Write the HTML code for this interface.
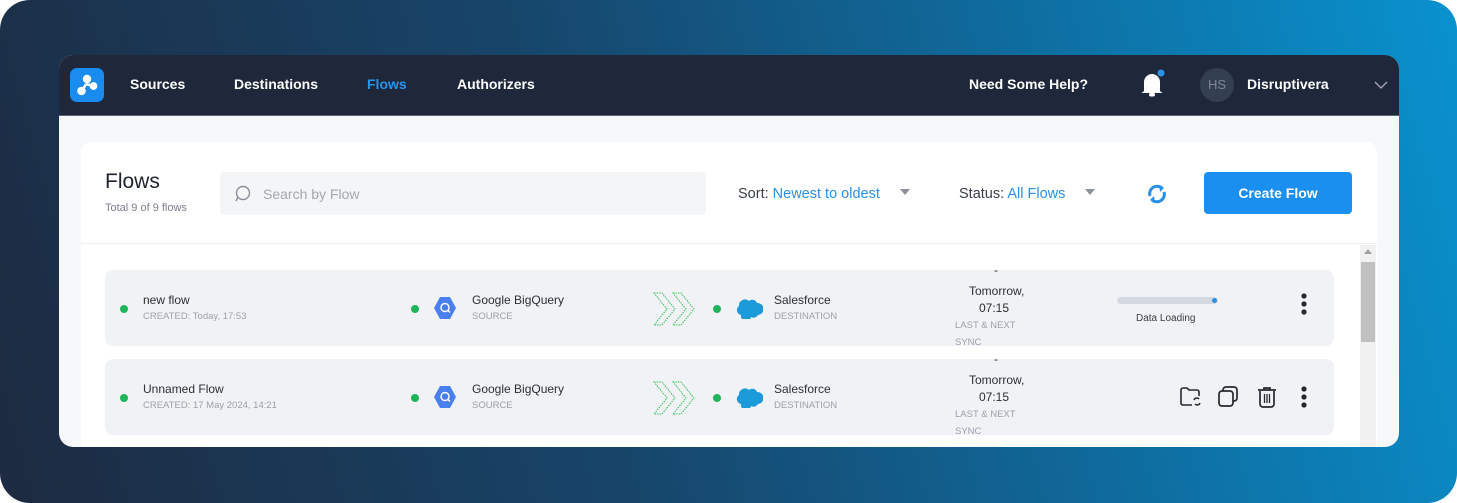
<!DOCTYPE html><html><head><style>
*{margin:0;padding:0;box-sizing:border-box}
body{width:1457px;height:503px;overflow:hidden;font-family:"Liberation Sans",sans-serif;background:#fff}
.bg{position:absolute;inset:0;border-radius:30px;background:linear-gradient(75deg,#1d2a40 0%,#17456a 40%,#0f6a9c 70%,#0992cf 100%)}
.win{position:absolute;left:59px;top:55px;width:1340px;height:392px;border-radius:14px;overflow:hidden;background:#f7f8fa}
.nav{position:absolute;left:0;top:0;width:1340px;height:61px;background:#1e283a;border-bottom:1px solid #5a6474}
.nav .t{position:absolute;top:21px;font-size:14px;font-weight:bold;color:#fff}
.logo{position:absolute;left:11px;top:13px;width:34px;height:34px;border-radius:7px;background:#1a8cf0}
.card{position:absolute;left:22px;top:87px;width:1296px;height:320px;background:#fff;border-radius:10px}
.abs{position:absolute}
.row{position:absolute;left:46px;width:1229px;height:76px;background:#f1f2f6;border-radius:8px}
.dot{position:absolute;width:8px;height:8px;border-radius:50%;background:#1fb35a}
.n{position:absolute;font-size:12px;color:#2c2f36}
.s{position:absolute;font-size:9.5px;color:#9aa0aa}
</style></head><body>
<div class="bg"></div>
<div class="win">
 <div class="nav">
  <div class="logo"><svg width="34" height="34"><g fill="#fff" stroke="#fff" stroke-width="2.5"><line x1="12" y1="23" x2="16" y2="16"/><line x1="16" y1="16" x2="24" y2="18"/><circle cx="17" cy="11" r="3"/><circle cx="23.5" cy="18" r="2.6"/><circle cx="11.5" cy="23" r="3"/></g></svg></div>
  <div class="t" style="left:71px">Sources</div>
  <div class="t" style="left:175px">Destinations</div>
  <div class="t" style="left:308px;color:#2a93ec">Flows</div>
  <div class="t" style="left:398px">Authorizers</div>
  <div class="t" style="left:910px">Need Some Help?</div>
  <svg class="abs" style="left:1080px;top:14px" width="28" height="30"><path d="M5 22 V13 a8 8 0 0 1 16 0 V22 l2.5 2 H2.5 Z" fill="#fff"/><rect x="10" y="24" width="6" height="3.5" rx="1.7" fill="#fff"/><circle cx="22" cy="4" r="3.5" fill="#2a93ec"/></svg>
  <div class="abs" style="left:1141px;top:13px;width:34px;height:34px;border-radius:50%;background:#343f52;color:#7d8798;font-size:13px;text-align:center;line-height:34px">HS</div>
  <div class="t" style="left:1188px">Disruptivera</div>
  <svg class="abs" style="left:1315px;top:25px" width="14" height="10"><path d="M1 2 L7 8 L13 2" stroke="#aab" fill="none" stroke-width="1.3"/></svg>
 </div>
 <div class="card">
  <div class="abs" style="left:24px;top:28px;font-size:21px;color:#1d2230">Flows</div>
  <div class="abs" style="left:24px;top:60px;font-size:11px;color:#7b808a">Total 9 of 9 flows</div>
  <div class="abs" style="left:139px;top:30px;width:486px;height:43px;background:#f4f5f7;border-radius:4px"></div>
  <svg class="abs" style="left:152px;top:43px" width="18" height="18"><circle cx="10" cy="8" r="6.5" stroke="#8a8f99" stroke-width="1.4" fill="none"/><path d="M5 12 L3 16" stroke="#8a8f99" stroke-width="1.4"/></svg>
  <div class="abs" style="left:182px;top:44px;font-size:14px;color:#a2a7b0">Search by Flow</div>
  <div class="abs" style="left:657px;top:44px;font-size:14.5px;color:#3a3e46">Sort: <span style="color:#2a8fe8">Newest to oldest</span></div>
  <div class="abs" style="left:819px;top:47px;border:5px solid transparent;border-top:6px solid #8b909a"></div>
  <div class="abs" style="left:878px;top:44px;font-size:14.5px;color:#3a3e46">Status: <span style="color:#2a8fe8">All Flows</span></div>
  <div class="abs" style="left:1004px;top:47px;border:5px solid transparent;border-top:6px solid #8b909a"></div>
  <svg class="abs" style="left:1064px;top:40px" width="24" height="24"><path d="M5 14 A7.5 7.5 0 0 1 17 6" stroke="#2a8fe8" stroke-width="3" fill="none"/><path d="M14 3 L19 6 L15 10 Z" fill="#2a8fe8"/><path d="M19 10 A7.5 7.5 0 0 1 7 18" stroke="#2a8fe8" stroke-width="3" fill="none"/><path d="M10 21 L5 18 L9 14 Z" fill="#2a8fe8"/></svg>
  <div class="abs" style="left:1123px;top:30px;width:148px;height:42px;background:#1a8ff0;border-radius:4px;color:#fff;font-size:14px;font-weight:bold;text-align:center;line-height:42px">Create Flow</div>
  <div class="abs" style="left:0;top:101px;width:1296px;height:1px;background:#eceef2"></div>
  <div class="abs" style="left:1279px;top:103px;width:16px;height:220px;background:#f1f1f1"></div>
  <div class="abs" style="left:1280px;top:120px;width:14px;height:80px;background:#c1c1c1"></div>
  <div class="abs" style="left:1283px;top:107px;border:4px solid transparent;border-bottom:5px solid #a0a0a0;border-top:0"></div>
 </div>
 <div class="row" style="top:215px"></div>
 <div class="row" style="top:304px"></div>
</div>
<div style="position:absolute;left:59px;top:55px;width:1340px;height:392px;overflow:hidden;border-radius:14px">
 <div class="dot" style="left:61px;top:250px"></div>
 <div class="n" style="left:84px;top:238px">new flow</div>
 <div class="s" style="left:84px;top:256px">CREATED: Today, 17:53</div>
 <div class="dot" style="left:352px;top:250px"></div>
 <svg class="abs" style="left:374px;top:241px" width="24" height="24"><path d="M7 1 H17 L23 12 L17 23 H7 L1 12 Z" fill="#4a7ff0"/><circle cx="12" cy="11.5" r="4" stroke="#fff" stroke-width="1.4" fill="none"/><path d="M14.5 14 L17 16.5" stroke="#fff" stroke-width="1.4"/></svg>
 <div class="n" style="left:413px;top:238px">Google BigQuery</div>
 <div class="s" style="left:413px;top:256px">SOURCE</div>
 <svg class="abs" style="left:593px;top:236px" width="48" height="36"><path d="M2 2 H10 L23 18 L10 34 H2 L15 18 Z M21 2 H29 L42 18 L29 34 H21 L34 18 Z" fill="none" stroke="#37c25c" stroke-width="1" stroke-dasharray="1.5 1"/></svg>
 <div class="dot" style="left:654px;top:250px"></div>
 <svg class="abs" style="left:676px;top:242px" width="28" height="22"><path d="M6 18 a5 5 0 0 1 -2 -9 a6 6 0 0 1 10 -5 a5 5 0 0 1 8 2 a6 6 0 0 1 1 12 a5 5 0 0 1 -7 2 a5 5 0 0 1 -10 -2z" fill="#1b9bd9"/></svg>
 <div class="n" style="left:715px;top:238px">Salesforce</div>
 <div class="s" style="left:715px;top:256px">DESTINATION</div>
 <div class="n" style="left:935px;top:208px">-</div>
 <div class="n" style="left:910px;top:229px">Tomorrow,</div>
 <div class="n" style="left:920px;top:246px">07:15</div>
 <div class="s" style="left:896px;top:265px">LAST &amp; NEXT</div>
 <div class="s" style="left:896px;top:282px">SYNC</div>
 <div class="abs" style="left:1058px;top:242px;width:101px;height:7px;border-radius:4px;background:#d4d8df"></div>
 <div class="abs" style="left:1153px;top:243px;width:5px;height:5px;border-radius:50%;background:#2a8fe8"></div>
 <div class="abs" style="left:1077px;top:258px;font-size:10px;color:#3a3e46">Data Loading</div>
 <svg class="abs" style="left:1241px;top:237px" width="8" height="24"><circle cx="4" cy="4" r="2.6" fill="#25292f"/><circle cx="4" cy="12" r="2.6" fill="#25292f"/><circle cx="4" cy="20" r="2.6" fill="#25292f"/></svg>
 <div class="dot" style="left:61px;top:339px"></div>
 <div class="n" style="left:84px;top:327px">Unnamed Flow</div>
 <div class="s" style="left:84px;top:345px">CREATED: 17 May 2024, 14:21</div>
 <div class="dot" style="left:352px;top:339px"></div>
 <svg class="abs" style="left:374px;top:330px" width="24" height="24"><path d="M7 1 H17 L23 12 L17 23 H7 L1 12 Z" fill="#4a7ff0"/><circle cx="12" cy="11.5" r="4" stroke="#fff" stroke-width="1.4" fill="none"/><path d="M14.5 14 L17 16.5" stroke="#fff" stroke-width="1.4"/></svg>
 <div class="n" style="left:413px;top:327px">Google BigQuery</div>
 <div class="s" style="left:413px;top:345px">SOURCE</div>
 <svg class="abs" style="left:593px;top:325px" width="48" height="36"><path d="M2 2 H10 L23 18 L10 34 H2 L15 18 Z M21 2 H29 L42 18 L29 34 H21 L34 18 Z" fill="none" stroke="#37c25c" stroke-width="1" stroke-dasharray="1.5 1"/></svg>
 <div class="dot" style="left:654px;top:339px"></div>
 <svg class="abs" style="left:676px;top:331px" width="28" height="22"><path d="M6 18 a5 5 0 0 1 -2 -9 a6 6 0 0 1 10 -5 a5 5 0 0 1 8 2 a6 6 0 0 1 1 12 a5 5 0 0 1 -7 2 a5 5 0 0 1 -10 -2z" fill="#1b9bd9"/></svg>
 <div class="n" style="left:715px;top:327px">Salesforce</div>
 <div class="s" style="left:715px;top:345px">DESTINATION</div>
 <div class="n" style="left:935px;top:297px">-</div>
 <div class="n" style="left:910px;top:318px">Tomorrow,</div>
 <div class="n" style="left:920px;top:335px">07:15</div>
 <div class="s" style="left:896px;top:354px">LAST &amp; NEXT</div>
 <div class="s" style="left:896px;top:371px">SYNC</div>
 <svg class="abs" style="left:1120px;top:330px" width="24" height="24"><path d="M13 20 H4 a2 2 0 0 1 -2 -2 V5 a2 2 0 0 1 2 -2 H8 L10 5 H18 a2 2 0 0 1 2 2 V11" fill="none" stroke="#25292f" stroke-width="1.6"/><path d="M15 15 a3 3 0 0 1 5 -1 M21 18 a3 3 0 0 1 -5 1" fill="none" stroke="#25292f" stroke-width="1.5"/></svg>
 <svg class="abs" style="left:1158px;top:330px" width="24" height="24"><rect x="2" y="6" width="14" height="15" rx="3" fill="none" stroke="#25292f" stroke-width="1.7"/><path d="M6 6 V5 a3 3 0 0 1 3 -3 H17 a3 3 0 0 1 3 3 V13 a3 3 0 0 1 -3 3 H16" fill="none" stroke="#25292f" stroke-width="1.7"/></svg>
 <svg class="abs" style="left:1196px;top:330px" width="24" height="24"><path d="M3 5 H21 M9 5 V3 H15 V5" stroke="#25292f" stroke-width="1.7" fill="none"/><path d="M5 6 V19 a3 3 0 0 0 3 3 H16 a3 3 0 0 0 3 -3 V6" stroke="#25292f" stroke-width="1.7" fill="none"/><path d="M9.5 9 V18 M12 9 V18 M14.5 9 V18" stroke="#25292f" stroke-width="1.3"/></svg>
 <svg class="abs" style="left:1241px;top:330px" width="8" height="24"><circle cx="4" cy="4" r="2.6" fill="#25292f"/><circle cx="4" cy="12" r="2.6" fill="#25292f"/><circle cx="4" cy="20" r="2.6" fill="#25292f"/></svg>
</div>
</body></html>
